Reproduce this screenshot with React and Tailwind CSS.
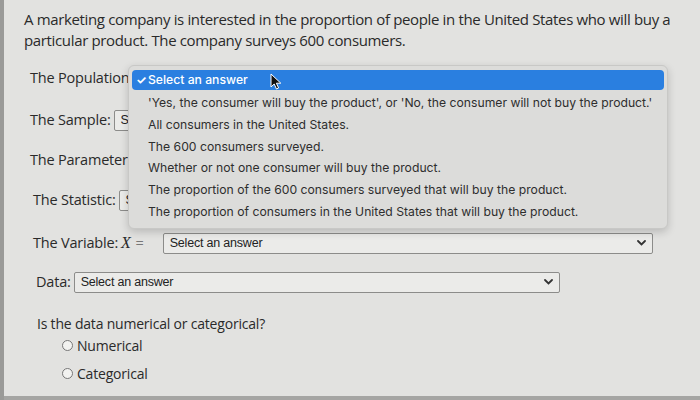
import React from 'react';

const menuOptions = [
  "'Yes, the consumer will buy the product', or 'No, the consumer will not buy the product.'",
  'All consumers in the United States.',
  'The 600 consumers surveyed.',
  'Whether or not one consumer will buy the product.',
  'The proportion of the 600 consumers surveyed that will buy the product.',
  'The proportion of consumers in the United States that will buy the product.',
];

function Chevron() {
  return (
    <svg width="9" height="6" viewBox="0 0 9 6" className="shrink-0">
      <path d="M1 1 L4.5 4.5 L8 1" fill="none" stroke="#333" strokeWidth="1.8" strokeLinecap="round" />
    </svg>
  );
}

function SelectBox({ className }) {
  return (
    <div
      className={`flex items-center justify-between h-[21px] border border-[#8c8c8a] rounded-[2px] bg-[#ebebe9] pl-[6px] pr-[6px] text-[12.5px] text-[#222] tracking-[-0.2px] ${className}`}
      style={{ fontFamily: '"Liberation Sans", Arial, sans-serif' }}
    >
      <span>Select an answer</span>
      <Chevron />
    </div>
  );
}

function Radio({ label }) {
  return (
    <label className="flex items-center gap-[4px] h-[22px] pl-[58px] text-[14px] text-[#2a2a2a]">
      <span className="w-[11px] h-[11px] rounded-full border-[1.5px] border-[#777] bg-[#f2f2f0]" />
      {label}
    </label>
  );
}

function Cursor() {
  return (
    <svg width="12" height="17" viewBox="0 0 12 17" className="absolute left-[138px] top-[3px]">
      <path d="M1 1 L1 14 L4.2 11 L6.5 16 L8.6 15 L6.4 10.2 L10.8 10.2 Z" fill="#111" stroke="#fff" strokeWidth="1" strokeLinejoin="round" />
    </svg>
  );
}

export default function App() {
  return (
    <div
      className="relative w-[700px] h-[400px] overflow-hidden bg-[#e2e2e0] text-[#2a2a2a] border-l-[4px] border-l-[#9a9a98]"
      style={{ fontFamily: '"Open Sans", "Noto Sans", sans-serif' }}
    >
      <p className="pl-[20px] pr-[20px] pt-[9px] text-[15px] leading-[21px] tracking-[-0.35px]">
        A marketing company is interested in the proportion of people in the United States who will buy a
        particular product. The company surveys 600 consumers.
      </p>

      <div className="flex flex-col text-[14.5px] tracking-[-0.2px]">
        <div className="flex items-center h-[22px] mt-[16px] pl-[26px]">
          <span>The Population</span>
          <SelectBox className="ml-[2px] w-[520px]" />
        </div>
        <div className="flex items-center h-[22px] mt-[20px] pl-[26px]">
          <span>The Sample:</span>
          <SelectBox className="ml-[3px] w-[520px]" />
        </div>
        <div className="flex items-center h-[22px] mt-[18px] pl-[26px]">
          <span>The Parameter</span>
          <SelectBox className="ml-[3px] w-[520px]" />
        </div>
        <div className="flex items-center h-[22px] mt-[18px] pl-[29px]">
          <span>The Statistic:</span>
          <SelectBox className="ml-[3px] w-[520px]" />
        </div>
        <div className="flex items-center h-[22px] mt-[21px] pl-[29px]">
          <span>The Variable:</span>
          <span className="ml-[3px] italic text-[16px]" style={{ fontFamily: '"Liberation Serif", serif' }}>X</span>
          <span className="ml-[5px] text-[#777]">=</span>
          <SelectBox className="ml-[19px] w-[490px]" />
        </div>
        <div className="flex items-center h-[22px] mt-[17px] pl-[32px]">
          <span>Data:</span>
          <SelectBox className="ml-[3px] w-[486px]" />
        </div>
        <div className="flex items-center h-[22px] mt-[19px] pl-[33px] text-[14px]">
          Is the data numerical or categorical?
        </div>
        <div className="mt-0">
          <Radio label="Numerical" />
        </div>
        <div className="mt-[6px]">
          <Radio label="Categorical" />
        </div>
      </div>

      {/* open dropdown menu */}
      <div
        className="absolute left-[124px] top-[65px] w-[540px] rounded-[6px] bg-[#dcdcda] border border-[#c8c8c6] shadow-[0_3px_8px_rgba(0,0,0,0.18)] px-[3px] pt-[4px] pb-[5px] text-[12.2px] text-[#2e2e2e]"
        style={{ fontFamily: 'Inter, "Noto Sans", sans-serif' }}
      >
        <div className="relative flex items-center h-[20px] rounded-[4px] bg-[#2a7fe0] text-white pl-[4px] mb-[2px]">
          <span className="w-[12px] text-[12px] font-bold">✓</span>
          <span className="font-medium">Select an answer</span>
          <Cursor />
        </div>
        {menuOptions.map((opt) => (
          <div key={opt} className="flex items-center h-[21.9px] pl-[16px]">
            {opt}
          </div>
        ))}
      </div>

      <div className="absolute left-0 right-0 bottom-0 h-[4px] bg-[#a5a5a3]" />
    </div>
  );
}
